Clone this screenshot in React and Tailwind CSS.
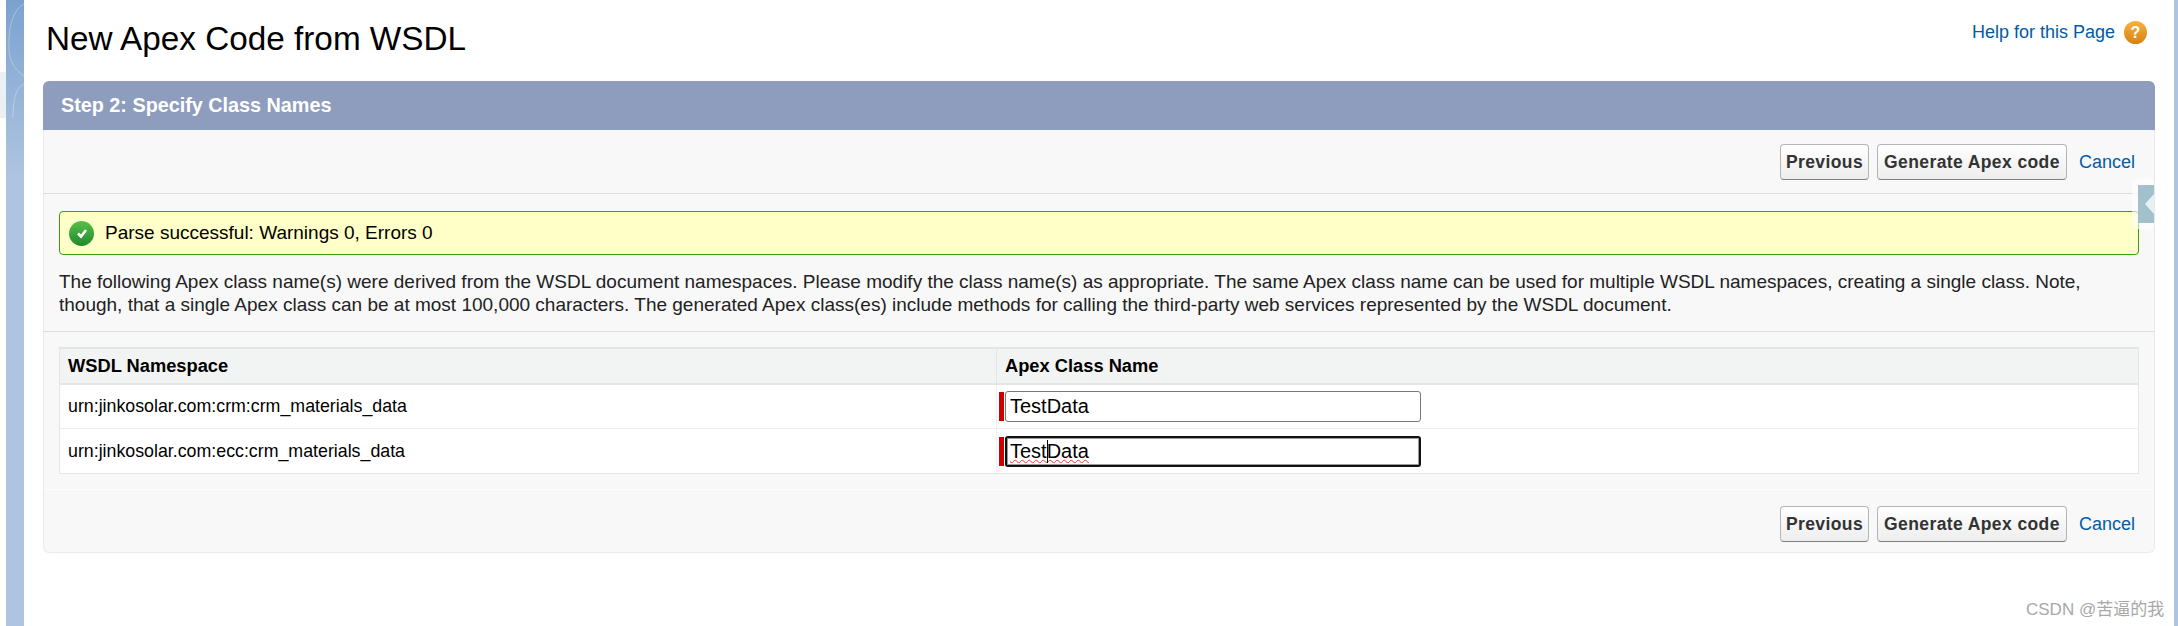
import React from "react";

const font = "font-['Liberation_Sans','Noto_Sans_CJK_SC',sans-serif]";

const ActionRow = () => (
  <div className="flex items-center justify-end gap-2 pr-[19px]">
    <button className="h-9 w-[89px] rounded-[4px] border border-[#b5b5b5] border-b-[#7f7f7f] bg-gradient-to-b from-white to-[#ededed] pt-px text-[17.5px] font-bold tracking-[0.4px] text-[#333]">
      Previous
    </button>
    <button className="h-9 w-[190px] rounded-[4px] border border-[#b5b5b5] border-b-[#7f7f7f] bg-gradient-to-b from-white to-[#ededed] pt-px text-[17.5px] font-bold tracking-[0.4px] text-[#333]">
      Generate Apex code
    </button>
    <a className="ml-1 text-[18px] text-[#015ba7]">Cancel</a>
  </div>
);

const ClassNameInput = ({ focused }) => (
  <div className="flex items-center pl-[2px]">
    <div className="h-[29px] w-[5px] bg-[#c00]" />
    <div
      className={
        focused
          ? "relative ml-px flex h-[31px] w-[416px] items-center rounded-[3px] border-2 border-[#111] pb-px pl-[3px] text-[20px] text-black shadow-[inset_0_0_0_1px_#999]"
          : "relative ml-px flex h-[31px] w-[416px] items-center rounded-[3px] border border-[#777] pb-px pl-[4px] text-[20px] text-black"
      }
    >
      {focused ? (
        <>
          <span className="underline decoration-[#e33] decoration-wavy decoration-1">TestData</span>
          <span className="absolute left-[40px] top-[2px] h-[23px] w-px bg-black" />
        </>
      ) : (
        "TestData"
      )}
    </div>
  </div>
);

export default function App() {
  return (
    <div className={`flex h-[626px] w-[2178px] overflow-hidden bg-white ${font}`}>
      <div className="flex w-[6px] flex-col pt-[72px]">
        <div className="h-[46px] bg-[#eaf1f5]" />
      </div>
      <div className="relative w-[18px] overflow-hidden bg-gradient-to-b from-[#7ba2cf] via-[#aec4e0] via-[28%] to-[#aec4e0]">
        <svg className="absolute left-0 top-0" width="18" height="130" fill="none" stroke="#fff" strokeOpacity="0.3">
          <path d="M18 4C6 10 2 30 3 50c1 12 6 20 15 26" />
          <path d="M18 84C10 88 7 98 7 118" />
        </svg>
      </div>

      <div className="flex-1 pl-[19px] pr-[19px]">
        <div className="flex h-[81px] justify-between pl-[3px] pr-[8px]">
          <h1 className="pt-[20px] text-[33.3px] leading-[37px] text-black">New Apex Code from WSDL</h1>
          <div className="flex h-fit items-center gap-[9px] pt-[19px]">
            <a className="text-[18px] text-[#015ba7]">Help for this Page</a>
            <span className="flex h-[23px] w-[23px] items-center justify-center rounded-full bg-gradient-to-b from-[#f6b33c] to-[#d9800f] text-[16px] font-bold leading-none text-white">
              ?
            </span>
          </div>
        </div>

        <div className="flex h-[49px] items-center rounded-t-[6px] bg-[#8e9dbe] pl-[18px] text-[19.8px] font-bold text-white">
          Step 2: Specify Class Names
        </div>

        <div className="relative h-[423px] rounded-b-[6px] border border-t-0 border-[#eaeaea] bg-[#f8f8f8]">
          <div className="flex h-[64px] items-center border-b border-[#dcdcdc] pt-[1px]">
            <div className="w-full">
              <ActionRow />
            </div>
          </div>

          <div className="absolute right-0 top-[49px] z-10 flex h-[50px] w-[22px] items-center justify-end rounded-l-[6px] bg-white/60">
            <div className="flex h-[38px] w-4 items-center justify-end bg-[#a2c1cd]">
              <div className="h-0 w-0 border-y-[10px] border-r-[9px] border-y-transparent border-r-[#e9f0f3]" />
            </div>
          </div>

          <div className="px-[15px] pt-[17px]">
            <div className="flex h-[44px] items-center rounded-[4px] border border-[#39a00c] bg-[#ffffc8] pl-[9px] text-[19px] text-black">
              <span className="flex h-[25px] w-[25px] items-center justify-center rounded-full bg-gradient-to-b from-[#57c04a] to-[#1f8a2c]">
                <svg width="14" height="14" viewBox="0 0 14 14" fill="none" stroke="#fff" strokeWidth="2.6">
                  <path d="M3 7.5l3 3 5-6.5" />
                </svg>
              </span>
              <span className="ml-[11px]">Parse successful: Warnings 0, Errors 0</span>
            </div>
            <p className="mt-[15px] h-[61px] text-[19px] leading-[23px] text-[#222]">
              The following Apex class name(s) were derived from the WSDL document namespaces. Please modify the class name(s) as appropriate. The same Apex class name can be used for multiple WSDL namespaces, creating a single class. Note, though, that a single Apex class can be at most 100,000 characters. The generated Apex class(es) include methods for calling the third-party web services represented by the WSDL document.
            </p>
          </div>

          <div className="border-t border-[#dcdcdc] px-[15px] pt-[15px]">
            <div className="border border-t-2 border-[#e3e6e6] bg-white text-[17.8px] text-black">
              <div className="grid h-[36px] grid-cols-[936px_1fr] items-center border-b-2 border-[#e3e6e6] bg-[#f2f3f3] text-[18.3px] font-bold">
                <div className="flex h-full items-center pl-2">WSDL Namespace</div>
                <div className="flex h-full items-center border-l border-[#e3e6e6] pl-2">Apex Class Name</div>
              </div>
              <div className="grid h-[44px] grid-cols-[936px_1fr] items-center border-b border-[#eeeeee]">
                <div className="pl-2">urn:jinkosolar.com:crm:crm_materials_data</div>
                <div className="flex h-full items-center border-l border-[#eeeeee]">
                  <ClassNameInput />
                </div>
              </div>
              <div className="grid h-[44px] grid-cols-[936px_1fr] items-center">
                <div className="pl-2">urn:jinkosolar.com:ecc:crm_materials_data</div>
                <div className="flex h-full items-center border-l border-[#eeeeee]">
                  <ClassNameInput focused />
                </div>
              </div>
            </div>
          </div>

          <div className="mt-[15px] flex h-[64px] items-center border-t border-[#fdfdfd] pt-[5px]">
            <div className="w-full">
              <ActionRow />
            </div>
          </div>
        </div>
      </div>

      <div className="w-[4px] bg-[#aec4e0]" />

      <div className="absolute left-[2026px] top-[597px] text-[17px] text-[#a8a8a8]">CSDN @苦逼的我</div>
    </div>
  );
}
